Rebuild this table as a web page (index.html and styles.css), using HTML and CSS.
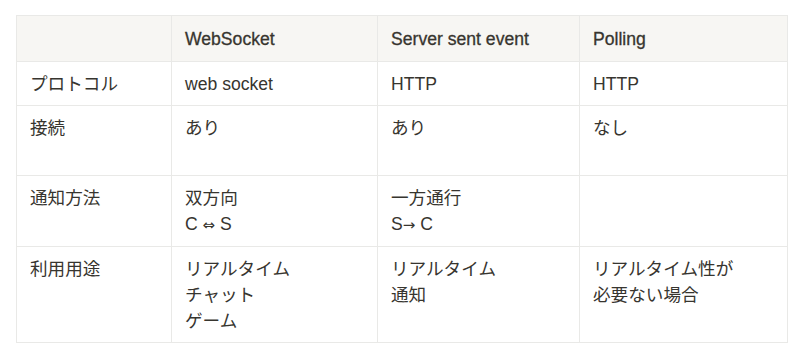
FILE: index.html
```html
<!DOCTYPE html>
<html lang="ja">
<head>
<meta charset="utf-8">
<link rel="stylesheet" href="styles.css">
</head>
<body>
<table class="cmp">
  <colgroup>
    <col class="c1"><col class="c2"><col class="c3"><col class="c4">
  </colgroup>
  <thead>
    <tr class="head">
      <th></th>
      <th>WebSocket</th>
      <th>Server sent event</th>
      <th>Polling</th>
    </tr>
  </thead>
  <tbody>
    <tr>
      <td>プロトコル</td>
      <td>web socket</td>
      <td>HTTP</td>
      <td>HTTP</td>
    </tr>
    <tr>
      <td>接続</td>
      <td>あり<br><br></td>
      <td>あり</td>
      <td>なし</td>
    </tr>
    <tr>
      <td>通知方法</td>
      <td>双方向<br>C <span class="arr">⇔</span> S</td>
      <td>一方通行<br>S<span class="arr">→</span> C</td>
      <td></td>
    </tr>
    <tr>
      <td>利用用途</td>
      <td>リアルタイム<br>チャット<br>ゲーム</td>
      <td>リアルタイム<br>通知</td>
      <td>リアルタイム性が<br>必要ない場合</td>
    </tr>
  </tbody>
</table>
</body>
</html>
```

FILE: styles.css
```css
html, body {
  margin: 0;
  padding: 0;
  background: #ffffff;
}
body {
  padding: 15px 0 0 16px;
  font-family: "Liberation Sans", "Noto Sans CJK JP", sans-serif;
  font-size: 17.6px;
  line-height: 26px;
  color: #37352f;
}
.cmp {
  border-collapse: collapse;
  table-layout: fixed;
  width: 771px;
}
.c1 { width: 155px; }
.c2 { width: 206px; }
.c3 { width: 202px; }
.c4 { width: 208px; }
.cmp th, .cmp td {
  border: 1px solid #e9e9e7;
  padding: 9px 13px 8px 13px;
  text-align: left;
  vertical-align: top;
  font-weight: 400;
}
.head th {
  background: #f7f6f3;
  padding-top: 10px;
  padding-bottom: 9px;
  -webkit-text-stroke: 0.3px #37352f;
}
.arr {
  font-family: "DejaVu Sans", sans-serif;
  font-size: 15px;
}
```
